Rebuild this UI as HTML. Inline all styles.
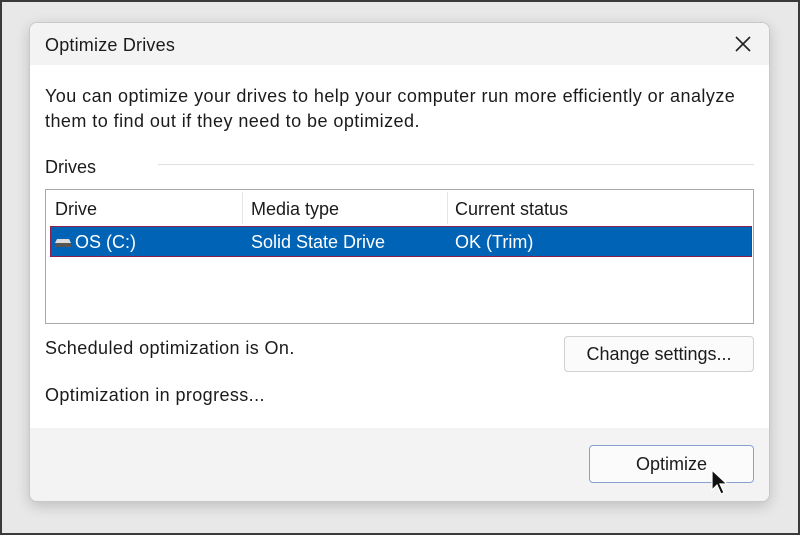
<!DOCTYPE html>
<html><head><style>
*{margin:0;padding:0;box-sizing:border-box}
body{width:800px;height:535px;background:#e8e8e8;font-family:"Liberation Sans",sans-serif;color:#1b1b1b;position:relative;overflow:hidden;border:2px solid #3a3a3a}
.dlg{position:absolute;left:27px;top:20px;width:741px;height:480px;background:#fff;border:1px solid #c8c8c8;border-radius:8px;overflow:hidden;box-shadow:0 4px 14px rgba(0,0,0,.18)}
.t{position:absolute;font-size:18px;white-space:nowrap}
.title{position:absolute;left:0;top:0;width:100%;height:42px;background:#f3f3f3}
.foot{position:absolute;left:0;top:405px;width:100%;height:75px;background:#f3f3f3}
.list{position:absolute;left:15px;top:166px;width:709px;height:135px;border:1px solid #a8a8a8;background:#fff}
.sel{position:absolute;left:4px;top:36px;width:702px;height:31px;background:#0063b6;border:1px solid #8a2050}
.sep{position:absolute;top:2px;width:1px;height:32px;background:#e5e5e5}
.btn{position:absolute;border:1px solid #d0d0d0;border-radius:4px;background:#fbfbfb;font-size:18px;text-align:center}
</style></head><body>
<div class="dlg">
 <div class="title"></div>
 <div class="t" style="left:15px;top:12px;font-size:18px;letter-spacing:0.2px">Optimize Drives</div>
 <svg style="position:absolute;left:705px;top:13px" width="16" height="16"><path d="M1 1L15 15M15 1L1 15" stroke="#222" stroke-width="1.6"/></svg>
 <div class="t" style="left:15px;top:61px;line-height:25px;font-size:18px;letter-spacing:0.45px">You can optimize your drives to help your computer run more efficiently or analyze<br>them to find out if they need to be optimized.</div>
 <div class="t" style="left:15px;top:134px">Drives</div>
 <div style="position:absolute;left:128px;top:141px;width:596px;height:1px;background:#e0e0e0"></div>
 <div class="list">
  <div class="t" style="left:9px;top:9px">Drive</div>
  <div class="sep" style="left:196px"></div>
  <div class="t" style="left:205px;top:9px">Media type</div>
  <div class="sep" style="left:401px"></div>
  <div class="t" style="left:409px;top:9px">Current status</div>
  <div class="sel">
   <svg style="position:absolute;left:3px;top:11px" width="18" height="10"><path d="M3 1H15L17 5H1Z" fill="#ddd"/><rect x="1" y="5" width="16" height="4" fill="#555"/></svg>
   <div class="t" style="left:24px;top:5px;color:#fff">OS (C:)</div>
   <div class="t" style="left:200px;top:5px;color:#fff">Solid State Drive</div>
   <div class="t" style="left:404px;top:5px;color:#fff">OK (Trim)</div>
  </div>
 </div>
 <div class="t" style="left:15px;top:315px;letter-spacing:0.4px">Scheduled optimization is On.</div>
 <div class="btn" style="left:534px;top:313px;width:190px;height:36px;line-height:34px">Change settings...</div>
 <div class="t" style="left:15px;top:362px;letter-spacing:0.4px">Optimization in progress...</div>
 <div class="foot"></div>
 <div class="btn" style="left:559px;top:422px;width:165px;height:38px;line-height:36px;border-color:#8a9fd0">Optimize</div>
 <svg style="position:absolute;left:680px;top:446px" width="20" height="28"><path d="M2 1V21L7 16L11 25L14 23.5L10 15H17Z" fill="#111" stroke="#fff" stroke-width="1.2"/></svg>
</div>
</body></html>
